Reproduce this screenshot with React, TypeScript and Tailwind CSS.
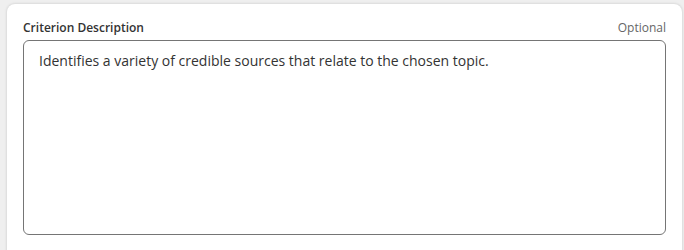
export default function App() {
  return (
    <div
      className="h-[250px] overflow-hidden bg-[#efefef] pl-[7px] pr-[2px] pt-[4px]"
      style={{ fontFamily: '"Open Sans", "Noto Sans", sans-serif' }}
    >
      <div className="h-[260px] rounded-t-lg bg-white px-4 pt-[16px] shadow-[0_0_3px_rgba(0,0,0,0.18)]">
        <div className="flex items-center justify-between text-xs leading-4">
          <span className="font-semibold text-[#333]">Criterion Description</span>
          <span className="text-[#666]">Optional</span>
        </div>
        <textarea
          className="mt-[4px] block h-[195px] w-full resize-none rounded-md border border-[#757575] px-[15px] pt-[10px] text-sm leading-5 text-[#333] outline-none"
          defaultValue="Identifies a variety of credible sources that relate to the chosen topic."
        />
      </div>
    </div>
  )
}
